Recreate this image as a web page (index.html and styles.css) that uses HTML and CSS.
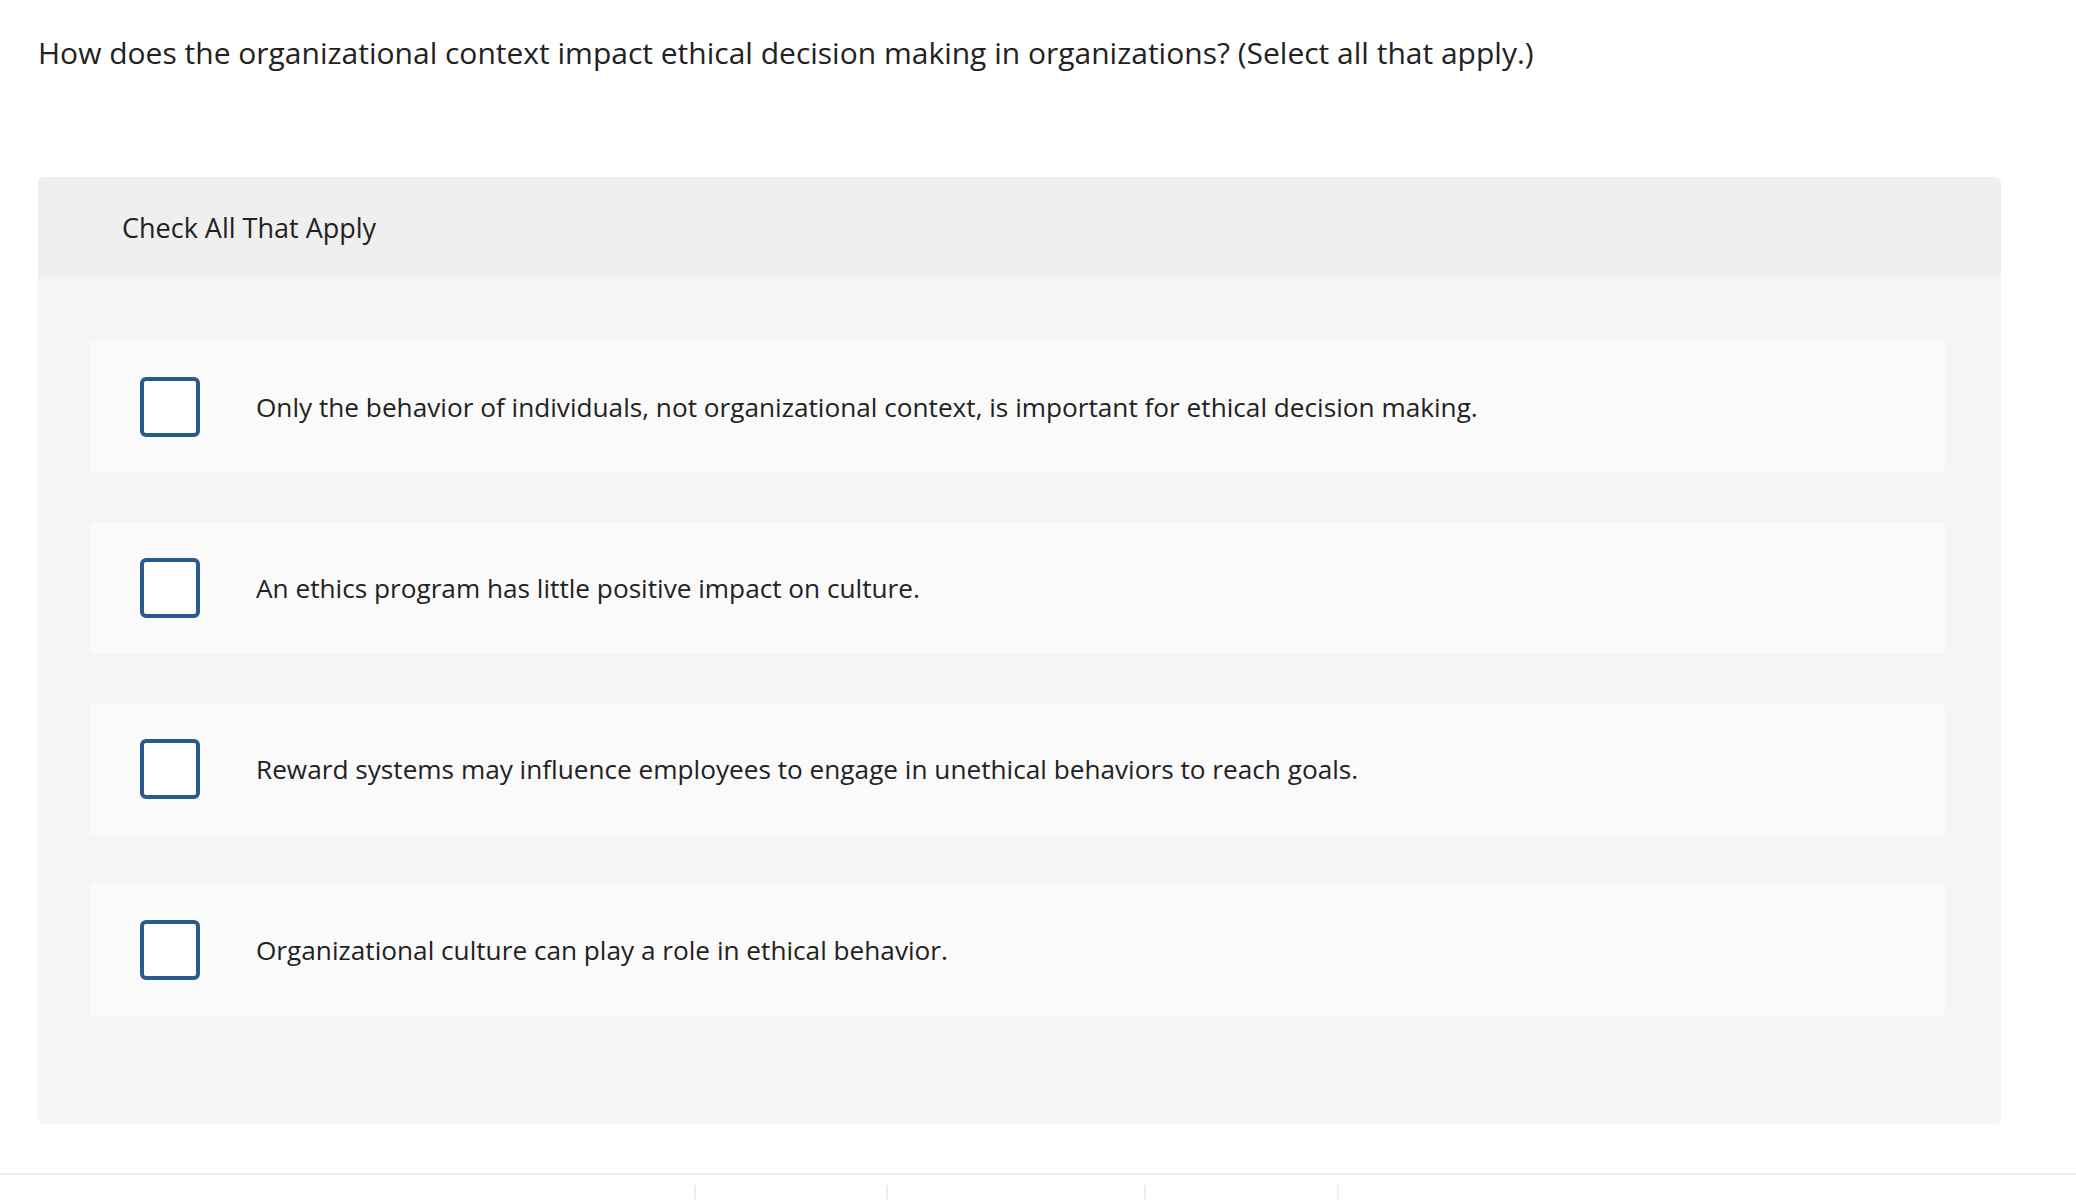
FILE: index.html
```html
<!DOCTYPE html>
<html lang="en">
<head>
<meta charset="utf-8">
<title>Check All That Apply</title>
<link rel="stylesheet" href="styles.css">
</head>
<body>
<div class="page">
  <p class="question">How does the organizational context impact ethical decision making in organizations? (Select all that apply.)</p>
  <section class="panel">
    <div class="panel-head">Check All That Apply</div>
    <div class="panel-body">
      <label class="option"><span class="box"></span><span class="opt-text">Only the behavior of individuals, not organizational context, is important for ethical decision making.</span></label>
      <label class="option"><span class="box"></span><span class="opt-text">An ethics program has little positive impact on culture.</span></label>
      <label class="option"><span class="box"></span><span class="opt-text">Reward systems may influence employees to engage in unethical behaviors to reach goals.</span></label>
      <label class="option"><span class="box"></span><span class="opt-text">Organizational culture can play a role in ethical behavior.</span></label>
    </div>
  </section>
  <footer class="footer">
    <div class="seg seg1"></div>
    <div class="seg seg2"></div>
    <div class="seg seg3"></div>
    <div class="seg seg4"></div>
  </footer>
</div>
</body>
</html>
```

FILE: styles.css
```css
html, body {
  margin: 0;
  padding: 0;
  background: #ffffff;
}
body {
  font-family: "Open Sans", "Liberation Sans", sans-serif;
  color: #222222;
}
.page {
  width: 2076px;
  height: 1200px;
  overflow: hidden;
}
.question {
  margin: 0;
  padding: 33px 0 0 38px;
  font-size: 30px;
  line-height: 40px;
  color: #222222;
}
.panel {
  margin: 104px 0 0 38px;
  width: 1963px;
  background: #f5f5f5;
  border-radius: 6px;
  overflow: hidden;
}
.panel-head {
  height: 100px;
  background: #efefef;
  padding-left: 84px;
  display: flex;
  align-items: center;
  font-size: 27px;
  color: #222222;
}
.panel-body {
  padding: 64px 56px 108px 52px;
  display: flex;
  flex-direction: column;
  gap: 49px;
}
.option {
  height: 132px;
  background: #fafafa;
  border-radius: 4px;
  display: flex;
  align-items: center;
  padding-left: 50px;
}
.box {
  width: 52px;
  height: 52px;
  border: 4px solid #2d5a8e;
  border-radius: 6px;
  background: #ffffff;
  flex: none;
}
.opt-text {
  margin-left: 56px;
  font-size: 26.2px;
  color: #222222;
}
.footer {
  margin-top: 49px;
  border-top: 2px solid #eeeeee;
  padding: 10px 0 0 694px;
  display: flex;
  height: 40px;
}
.seg {
  border-left: 2px solid #eeeeee;
  height: 100%;
}
.seg1 { width: 190px; }
.seg2 { width: 256px; }
.seg3 { width: 191px; }
.seg4 { width: 100px; }
```
